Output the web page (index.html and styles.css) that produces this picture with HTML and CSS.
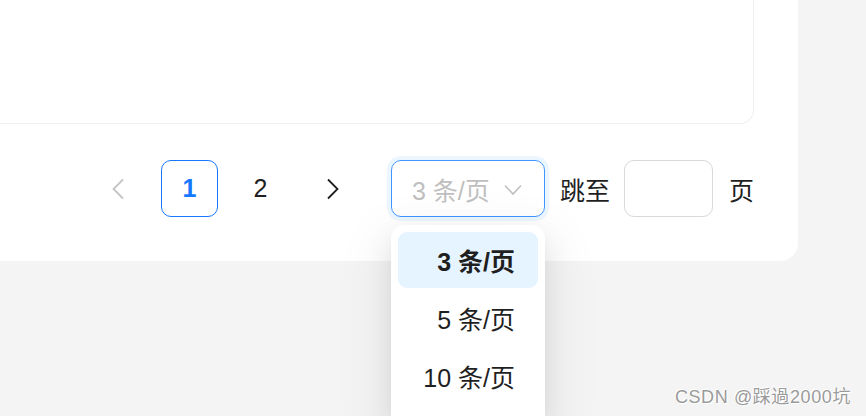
FILE: index.html
```html
<!DOCTYPE html>
<html lang="zh">
<head>
<meta charset="utf-8">
<link rel="stylesheet" href="styles.css">
</head>
<body>
<div class="card">
  <div class="table-box"></div>
  <div class="pagination">
    <span class="pg-item pg-arrow disabled">
      <svg width="14" height="22" viewBox="0 0 14 22"><path d="M12 1.5 L2.5 11 L12 20.5" fill="none" stroke="currentColor" stroke-width="1.8"/></svg>
    </span>
    <span class="pg-item active">1</span>
    <span class="pg-item">2</span>
    <span class="pg-item pg-arrow next">
      <svg width="14" height="22" viewBox="0 0 14 22"><path d="M2 1.5 L11.5 11 L2 20.5" fill="none" stroke="currentColor" stroke-width="1.8"/></svg>
    </span>
    <div class="size-select">
      <span class="size-value">3 条/页</span>
      <svg class="caret" width="18" height="12" viewBox="0 0 18 12"><path d="M1 1.5 L9 10 L17 1.5" fill="none" stroke="currentColor" stroke-width="1.6"/></svg>
      <div class="dropdown">
        <div class="option selected">3 条/页</div>
        <div class="option">5 条/页</div>
        <div class="option">10 条/页</div>
      </div>
    </div>
    <span class="label">跳至</span>
    <span class="jump-input"></span>
    <span class="label last">页</span>
  </div>
</div>
<div class="watermark">CSDN @踩過2000坑</div>
</body>
</html>
```
FILE: styles.css
```css
* { box-sizing: border-box; }
html, body { margin: 0; padding: 0; }
body {
  width: 866px;
  height: 416px;
  overflow: hidden;
  background: #f4f4f4;
  font-family: "Liberation Sans", "Noto Sans CJK SC", sans-serif;
  color: #1f1f1f;
  position: relative;
}
.card {
  margin: -40px 0 0 -40px;
  width: 838px;
  background: #fff;
  border-radius: 0 0 18px 0;
  padding: 0 44px 44px 20px;
}
.table-box {
  height: 164px;
  border: 1px solid #efefef;
  border-top: none;
  border-radius: 0 0 14px 14px;
}
.pagination {
  margin-top: 36px;
  display: flex;
  justify-content: flex-end;
  align-items: center;
  height: 57px;
}
.pg-item {
  width: 57px;
  height: 57px;
  margin-left: 14px;
  display: flex;
  align-items: center;
  justify-content: center;
  font-size: 25px;
  border-radius: 10px;
  border: 1px solid transparent;
  color: #1f1f1f;
}
.pg-item:first-child { margin-left: 0; }
.pg-arrow { color: #1f1f1f; }
.pg-arrow.next { padding-left: 4px; }
.pg-arrow.disabled { color: #c4c4c4; }
.pg-item.active {
  border-color: #1677ff;
  color: #1677ff;
  font-weight: 700;
}
.size-select {
  position: relative;
  margin-left: 31px;
  width: 154px;
  height: 57px;
  border: 1px solid #4096ff;
  border-radius: 10px;
  box-shadow: 0 0 0 4px rgba(5, 145, 255, 0.08);
  display: flex;
  align-items: center;
  justify-content: space-between;
  padding: 0 22px 0 20px;
  font-size: 25px;
}
.size-value { color: #bfbfbf; }
.caret { color: #bfbfbf; margin-top: 2px; }
.dropdown {
  position: absolute;
  left: -1px;
  top: 64px;
  width: 154px;
  height: 191px;
  background: #fff;
  border-radius: 14px 14px 0 0;
  padding: 7px;
  overflow: hidden;
  box-shadow: 0 11px 28px 0 rgba(0,0,0,0.08), 0 5px 11px -7px rgba(0,0,0,0.12), 0 16px 50px 14px rgba(0,0,0,0.05);
}
.option {
  height: 56px;
  margin-bottom: 2px;
  display: flex;
  align-items: center;
  justify-content: flex-end;
  padding-right: 23px;
  border-radius: 9px;
  font-size: 25px;
  color: #1f1f1f;
}
.option.selected {
  background: #e6f4ff;
  font-weight: 700;
}
.label {
  margin-left: 15px;
  font-size: 25px;
  color: #1f1f1f;
}
.label.last { margin-left: 16px; }
.jump-input {
  margin-left: 14px;
  width: 89px;
  height: 57px;
  border: 1px solid #d9d9d9;
  border-radius: 10px;
  background: #fff;
}
.watermark {
  position: absolute;
  right: 15px;
  bottom: 8px;
  font-size: 18px;
  letter-spacing: 0.6px;
  color: #9a9a9a;
  text-shadow: 0 0 1px #fff, 1px 1px 0 #fff, -1px -1px 0 #fff;
  font-family: "Liberation Sans", "Noto Sans CJK SC", sans-serif;
}
```
